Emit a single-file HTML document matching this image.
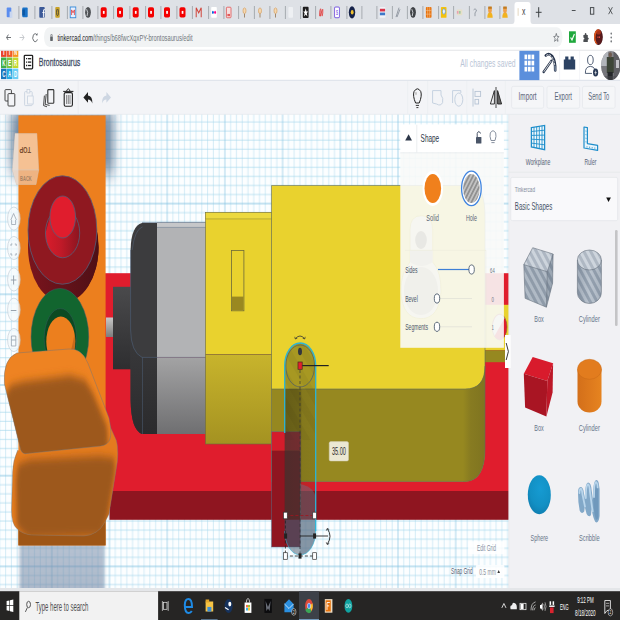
<!DOCTYPE html>
<html><head><meta charset="utf-8"><title>Tinkercad</title>
<style>
html,body{margin:0;padding:0;background:#fff;overflow:hidden}
svg{display:block;font-family:"Liberation Sans", sans-serif}
</style></head><body>
<svg width="620" height="620" viewBox="0 0 620 620">
<defs>
<pattern id="grid" x="51.8" y="22.2" width="57.7" height="90.7" patternUnits="userSpaceOnUse">
  <rect width="57.7" height="90.7" fill="#fcfeff"/>
  <g stroke="#a2d5eb">
   <line stroke-width="0.45" x1="5.77" y1="0" x2="5.77" y2="90.7"/><line stroke-width="0.45" x1="11.54" y1="0" x2="11.54" y2="90.7"/><line stroke-width="0.45" x1="17.31" y1="0" x2="17.31" y2="90.7"/><line stroke-width="0.45" x1="23.08" y1="0" x2="23.08" y2="90.7"/><line stroke-width="0.45" x1="28.85" y1="0" x2="28.85" y2="90.7"/><line stroke-width="0.45" x1="34.62" y1="0" x2="34.62" y2="90.7"/><line stroke-width="0.45" x1="40.39" y1="0" x2="40.39" y2="90.7"/><line stroke-width="0.45" x1="46.16" y1="0" x2="46.16" y2="90.7"/><line stroke-width="0.45" x1="51.93" y1="0" x2="51.93" y2="90.7"/><line stroke-width="0.65" x1="0" y1="9.07" x2="57.7" y2="9.07"/><line stroke-width="0.65" x1="0" y1="18.14" x2="57.7" y2="18.14"/><line stroke-width="0.65" x1="0" y1="27.21" x2="57.7" y2="27.21"/><line stroke-width="0.65" x1="0" y1="36.28" x2="57.7" y2="36.28"/><line stroke-width="0.65" x1="0" y1="45.35" x2="57.7" y2="45.35"/><line stroke-width="0.65" x1="0" y1="54.42" x2="57.7" y2="54.42"/><line stroke-width="0.65" x1="0" y1="63.49" x2="57.7" y2="63.49"/><line stroke-width="0.65" x1="0" y1="72.56" x2="57.7" y2="72.56"/><line stroke-width="0.65" x1="0" y1="81.63" x2="57.7" y2="81.63"/>
  </g>
  <path d="M0,0 L0,90.7 M57.7,0 L57.7,90.7" stroke="#7fc2e0" stroke-width="0.65"/>
  <path d="M0,0 L57.7,0 M0,90.7 L57.7,90.7" stroke="#7fc2e0" stroke-width="0.9"/>
</pattern>
<pattern id="stripes" width="3.5" height="10" patternUnits="userSpaceOnUse" patternTransform="rotate(27)">
  <rect width="3.5" height="10" fill="#c2c2c2"/><rect width="1.7" height="10" fill="#8f8f8f"/>
</pattern>
<pattern id="stripesB" width="6" height="10" patternUnits="userSpaceOnUse" patternTransform="rotate(-28)">
  <rect width="6" height="10" fill="#c2cbd5"/><rect width="3" height="10" fill="#9ba7b5"/>
</pattern>
<filter id="blur4" x="-50%" y="-50%" width="200%" height="200%"><feGaussianBlur stdDeviation="5 9"/></filter>
<filter id="blur2" x="-50%" y="-50%" width="200%" height="200%"><feGaussianBlur stdDeviation="1.8 2"/></filter>
<linearGradient id="shadowDown" x1="0" y1="0" x2="0" y2="1">
  <stop offset="0" stop-color="#7489a6" stop-opacity="0.5"/><stop offset="1" stop-color="#6f84a2" stop-opacity="0.58"/>
</linearGradient>
<linearGradient id="greySide" x1="0" y1="0" x2="0" y2="1">
  <stop offset="0" stop-color="#a3a3a4"/><stop offset="1" stop-color="#6f6f71"/>
</linearGradient>
<linearGradient id="darkSide" x1="0" y1="0" x2="0" y2="1">
  <stop offset="0" stop-color="#3a3a3c"/><stop offset="1" stop-color="#2b2b2d"/>
</linearGradient>
<linearGradient id="shaft" x1="0" y1="0" x2="0" y2="1">
  <stop offset="0" stop-color="#4a4a4c"/><stop offset="1" stop-color="#2e2e30"/>
</linearGradient>
<linearGradient id="coneG" x1="0" y1="0" x2="1" y2="0">
  <stop offset="0" stop-color="#d91c2b"/><stop offset="0.45" stop-color="#c01a28"/><stop offset="1" stop-color="#8b1520"/>
</linearGradient>
<linearGradient id="cylSide" x1="0" y1="0" x2="1" y2="0">
  <stop offset="0" stop-color="#7a141d"/><stop offset="1" stop-color="#4f1016"/>
</linearGradient>
<linearGradient id="smallcyl" x1="0" y1="0" x2="0" y2="1">
  <stop offset="0" stop-color="#c8c8c8"/><stop offset="1" stop-color="#7d7d7d"/>
</linearGradient>
<clipPath id="canvasClip"><rect x="0" y="114" width="510" height="476"/></clipPath>
</defs>
<rect x="0" y="0" width="620" height="620" fill="#fff"/>
<rect x="0" y="114" width="510" height="476" fill="url(#grid)"/>
<g clip-path="url(#canvasClip)">
<rect x="10.5" y="110" width="103" height="64" fill="#5f7894" opacity="0.85" filter="url(#blur4)"/>
<rect x="19.5" y="530" width="85" height="66" fill="url(#shadowDown)" filter="url(#blur2)"/>
<rect x="105" y="273.2" width="406" height="219" fill="#e01d2d"/>
<rect x="109.5" y="491" width="402" height="28.8" fill="#8f1520"/>
<rect x="18.4" y="115.4" width="87.2" height="430" fill="#ec7f1e"/>
<rect x="18.4" y="518" width="87.2" height="27.4" fill="#9e5616"/>
<ellipse cx="64.2" cy="247" rx="34.4" ry="54" fill="url(#cylSide)"/>
<path d="M28,230 L28,247 A34.4,54 0 0 0 98.6,247 L96.8,230 Z" fill="url(#cylSide)"/>
<ellipse cx="62.4" cy="230" rx="34.4" ry="54.2" fill="#8f1820" stroke="#55607a" stroke-width="0.8"/>
<path d="M45.6,233 A17,24.8 0 0 0 79.7,233 L75.5,217 A12.8,21 0 0 0 50,217 Z" fill="url(#coneG)"/>
<ellipse cx="62.6" cy="233" rx="17.1" ry="24.8" fill="none" stroke="#55607a" stroke-width="0.8"/>
<ellipse cx="62.7" cy="217" rx="12.8" ry="21" fill="#e01d2d" stroke="#55607a" stroke-width="0.8"/>
<ellipse cx="59.9" cy="337" rx="28.8" ry="48.6" fill="#12652f" stroke="#3d5a6a" stroke-width="0.5"/>
<ellipse cx="60.4" cy="338.5" rx="16.2" ry="30" fill="#0b4a22" stroke="#3d5a6a" stroke-width="0.4"/>
<ellipse cx="60.8" cy="341.5" rx="14.5" ry="25" fill="#ec7f1e"/>
<path d="M72,360 Q76.5,350 74.6,333 Q73,345 68,360 Z" fill="#b8611a" fill-opacity="0.7"/>
<rect x="106" y="317.5" width="7.5" height="19.5" fill="url(#smallcyl)"/>
<rect x="113" y="286.8" width="18" height="82.5" fill="url(#shaft)"/>
<path d="M157.2,223 L142,223 Q131,226 130.6,250 L130.6,400 Q131,430 142,434 L157.2,434 Z" fill="#3c3c3e"/>
<path d="M130.6,330 Q131,352 142,357.4 L157.2,357.4 L157.2,434 L142,434 Q131,430 130.6,400 Z" fill="url(#darkSide)"/>
<path d="M130.6,250 L130.6,330 Q131,352 142,357.4 L157.2,357.4" fill="none" stroke="#4e6079" stroke-width="0.6"/>
<path d="M142.5,357.4 L142.5,434" fill="none" stroke="#4e6079" stroke-width="0.5"/>
<path d="M142.6,226.8 Q134.6,229.5 132.2,250" fill="none" stroke="#5b6f8a" stroke-width="0.5" stroke-opacity="0.8"/>
<rect x="157" y="223" width="49" height="134.4" fill="#b2b3b5"/>
<rect x="157" y="222.4" width="49" height="5" fill="#c6c7c9"/>
<line x1="157" y1="227.4" x2="206" y2="227.4" stroke="#64768c" stroke-width="0.5"/>
<line x1="142" y1="222.4" x2="206" y2="222.4" stroke="#4e6079" stroke-width="0.6"/>
<rect x="157" y="357.4" width="49" height="76.6" fill="url(#greySide)"/>
<line x1="157" y1="357.4" x2="206" y2="357.4" stroke="#5b6f86" stroke-width="0.6"/>
<rect x="205.5" y="212.5" width="66.5" height="142" fill="#e9d22e"/>
<rect x="205.5" y="212.5" width="66.5" height="6.4" fill="#ecd93f"/>
<line x1="205.5" y1="218.9" x2="272" y2="218.9" stroke="#8d8430" stroke-width="0.5"/>
<linearGradient id="ysmall" x1="0" y1="0" x2="0" y2="1"><stop offset="0" stop-color="#c8b42c"/><stop offset="1" stop-color="#a49221"/></linearGradient>
<rect x="205.5" y="354.5" width="66.5" height="89.5" fill="url(#ysmall)"/>
<rect x="205.5" y="212.5" width="66.5" height="231.5" fill="none" stroke="#6d6a3a" stroke-width="0.6"/>
<line x1="205.5" y1="354.5" x2="272" y2="354.5" stroke="#6d6a3a" stroke-width="0.6"/>
<rect x="231.5" y="250.5" width="12.4" height="60.3" fill="#e9d22e" stroke="#6d6a3a" stroke-width="0.8"/>
<rect x="231.9" y="296.6" width="11.6" height="13.8" fill="#9a8820"/>
<rect x="485" y="304.8" width="26" height="45.4" fill="#e9d22e"/>
<rect x="485" y="350.2" width="26" height="12" fill="#968820"/>
<ellipse cx="499.6" cy="327" rx="7.4" ry="13" fill="#e01d2d"/>
<path d="M494.4,336.2 A7.4,13 0 0 1 504.8,317.8 Z" fill="#d9d9d4"/>
<ellipse cx="499.6" cy="327" rx="7.4" ry="13" fill="none" stroke="#6d6a3a" stroke-width="0.5"/>
<path d="M271.5,481.4 L271.5,185.5 L473,185.5 Q485,186.5 485,218 L485,448 Q485,481.4 465,481.4 Z" fill="#e9d22e"/>
<path d="M271.5,389 L465,389 Q485,389 485,366 L485,448 Q485,481.4 465,481.4 L271.5,481.4 Z" fill="#968820"/>
<linearGradient id="ysideR" x1="0" y1="0" x2="1" y2="0"><stop offset="0" stop-color="#968820"/><stop offset="0.35" stop-color="#877b21"/><stop offset="1" stop-color="#7f7420"/></linearGradient>
<path d="M463,389 L465,389 Q485,389 485,366 L485,448 Q485,481.4 465,481.4 L463,481.4 Z" fill="url(#ysideR)"/>
<path d="M271.5,481.4 L271.5,185.5 L473,185.5 Q485,186.5 485,218 L485,448 Q485,481.4 465,481.4 Z" fill="none" stroke="#5f6b5a" stroke-width="0.6"/>
<path d="M271.5,389 L465,389 Q485,389 485,366" fill="none" stroke="#5f6b5a" stroke-width="0.6"/>
<clipPath id="blobLo"><path d="M17.8,450 Q13,460 12.6,472 L11.5,510 Q11.5,524 16.8,528.5 Q22,534 31.4,535 L84,536 Q98,535 105,522 L109,514 L117.4,461.4 Q118.5,448 116.4,440.5 L109,424 L100,446 L25,454 Z"/></clipPath>
<clipPath id="blobUp"><path d="M16.8,353 L69,349 Q82,348 88,363.5 L109,418 Q112,432 110,439 Q108,445 100.6,446 L25,453.7 Q21,453 20,447 L4.4,384 Q2.6,359 16.8,353 Z"/></clipPath>
<filter id="blurB" x="-30%" y="-30%" width="160%" height="160%"><feGaussianBlur stdDeviation="2.3 4.2"/></filter>
<g clip-path="url(#blobLo)"><rect x="0" y="420" width="130" height="125" fill="#e47b1f"/><path d="M18,464 L30,459.5 L100,456 L114.5,458 L115,472 L107.5,517 L101,536 L28,538 L17,527 L16,480 Z" fill="#9d581a" filter="url(#blurB)"/></g>
<path d="M17.8,450 Q13,460 12.6,472 L11.5,510 Q11.5,524 16.8,528.5 Q22,534 31.4,535 L84,536 Q98,535 105,522 L109,514 L117.4,461.4 Q118.5,448 116.4,440.5 L109,424" fill="none" stroke="#6b7a8c" stroke-width="0.5" stroke-opacity="0.7"/>
<g clip-path="url(#blobUp)"><rect x="0" y="340" width="130" height="125" fill="#ee8322"/><path d="M5.5,394 L11,385 L24,381.5 L70,375.5 L85,380 L92.5,392 L107.5,427 L108.5,456 L19,462 L4.5,404 Z" fill="#9d581a" filter="url(#blurB)"/></g>
<path d="M16.8,353 L69,349 Q82,348 88,363.5 L109,418 Q112,432 110,439 Q108,445 100.6,446 L25,453.7 Q21,453 20,447 L4.4,384 Q2.6,359 16.8,353 Z" fill="none" stroke="#5f7388" stroke-width="0.5" stroke-opacity="0.8"/>
<rect x="271.5" y="431.8" width="29" height="19" fill="#d51c2b"/>
<rect x="271.5" y="450.6" width="29" height="96.4" fill="#8f1520"/>
<rect x="271.5" y="431.8" width="29" height="115.2" fill="none" stroke="#5b6f86" stroke-width="0.5"/>
<clipPath id="capTop"><rect x="280" y="340" width="40" height="179.8"/></clipPath>
<clipPath id="capBot"><rect x="280" y="519.8" width="40" height="40"/></clipPath>
<clipPath id="capClip"><path d="M284.7,365.5 A15.5,22.5 0 0 1 315.7,365.5 L315.7,531 A15.5,24 0 0 1 284.7,531 Z"/></clipPath>
<pattern id="capStripes" width="14" height="10" patternUnits="userSpaceOnUse" patternTransform="rotate(-30)"><rect width="7" height="10" fill="#000" fill-opacity="0.04"/></pattern>
<linearGradient id="capG" x1="0" y1="0" x2="1" y2="0"><stop offset="0" stop-color="#35320e" stop-opacity="0.5"/><stop offset="0.5" stop-color="#35320e" stop-opacity="0.42"/><stop offset="0.56" stop-color="#3d3a10" stop-opacity="0.2"/><stop offset="1" stop-color="#3d3a10" stop-opacity="0.16"/></linearGradient>
<clipPath id="capTopA"><rect x="280" y="340" width="40" height="49"/></clipPath>
<clipPath id="capTopB"><rect x="280" y="389" width="40" height="130.8"/></clipPath>
<g clip-path="url(#capTopA)"><path d="M284.7,365.5 A15.5,22.5 0 0 1 315.7,365.5 L315.7,531 A15.5,24 0 0 1 284.7,531 Z" fill="#3d3a10" fill-opacity="0.38"/></g>
<g clip-path="url(#capTopB)"><path d="M284.7,365.5 A15.5,22.5 0 0 1 315.7,365.5 L315.7,531 A15.5,24 0 0 1 284.7,531 Z" fill="url(#capG)"/></g>
<g clip-path="url(#capBot)"><path d="M284.7,365.5 A15.5,22.5 0 0 1 315.7,365.5 L315.7,531 A15.5,24 0 0 1 284.7,531 Z" fill="#56687a" fill-opacity="0.55"/></g>
<g clip-path="url(#capClip)"><rect x="280" y="340" width="40" height="100" fill="url(#capStripes)"/></g>
<g clip-path="url(#capClip)"><rect x="284" y="432" width="16.2" height="115" fill="#2a4058" fill-opacity="0.3"/><path d="M300.2,484 Q315.7,487 315.7,500 L315.7,560 L300.2,560 Z" fill="#5f7890" fill-opacity="0.42"/></g>
<ellipse cx="300.2" cy="366" rx="14.4" ry="21" fill="none" stroke="#4a5a6a" stroke-width="0.7"/>
<path d="M284.7,433 L284.7,365.5 A15.5,22.5 0 0 1 315.7,365.5 L315.7,531" fill="none" stroke="#2bb5d9" stroke-width="1.3"/>
<path d="M315.7,531 A15.5,24 0 0 1 284.7,531" fill="none" stroke="#2bb5d9" stroke-width="0.8" stroke-opacity="0.7"/>
<line x1="300" y1="370" x2="300" y2="556" stroke="#333" stroke-width="0.7" stroke-dasharray="3 2.5"/>
<line x1="302" y1="365.6" x2="328.7" y2="365.6" stroke="#222" stroke-width="1.2"/>
<rect x="298" y="362" width="4.2" height="7.3" fill="#e2202c" stroke="#4a2a20" stroke-width="0.7"/>
<ellipse cx="300" cy="351.5" rx="2" ry="3.8" fill="#33363d"/>
<path d="M295.5,338.5 Q300,333.5 304.5,338.5" fill="none" stroke="#333" stroke-width="0.8"/>
<path d="M294.8,336.8 L295.3,339 L297.3,338.2 M305.2,336.8 L304.7,339 L302.7,338.2" fill="none" stroke="#333" stroke-width="0.7"/>
<rect x="329.2" y="441.6" width="19.3" height="19.4" rx="1.6" fill="#ebe8d3" stroke="#cfcbae" stroke-width="0.5"/>
<text x="338.9" y="454.6" font-size="11" fill="#2e2e2e" text-anchor="middle" font-weight="normal" textLength="14" lengthAdjust="spacingAndGlyphs" >35.00</text>
<line x1="285.4" y1="515.5" x2="314.8" y2="515.5" stroke="#a01520" stroke-width="0.8" stroke-dasharray="3 2"/>
<path d="M285.4,515.5 L285.4,556 L314.8,556" fill="none" stroke="#222" stroke-width="0.8" stroke-dasharray="3 2"/>
<line x1="300" y1="536" x2="328" y2="536" stroke="#222" stroke-width="0.9"/>
<rect x="283.5" y="512.2" width="3.8" height="6.6" fill="#fff" stroke="#333" stroke-width="0.7"/>
<rect x="312.70000000000005" y="512.2" width="3.8" height="6.6" fill="#fff" stroke="#333" stroke-width="0.7"/>
<rect x="283.5" y="552.7" width="3.8" height="6.6" fill="#fff" stroke="#333" stroke-width="0.7"/>
<rect x="312.70000000000005" y="552.7" width="3.8" height="6.6" fill="#fff" stroke="#333" stroke-width="0.7"/>
<rect x="284.1" y="533.4" width="3" height="5.2" fill="#222"/>
<rect x="298.5" y="553.4" width="3" height="5.2" fill="#222"/>
<rect x="313.1" y="533.4" width="3" height="5.2" fill="#222"/>
<path d="M327.5,529 Q332.5,536 327.5,544" fill="none" stroke="#222" stroke-width="0.9"/>
<path d="M326.3,530.6 L327.3,528.4 L329.2,529.6 M326.3,542.4 L327.3,544.6 L329.2,543.4" fill="none" stroke="#222" stroke-width="0.8"/>
<rect x="400.3" y="152.8" width="103.6" height="195" fill="#f8f9f8" fill-opacity="0.9"/>
<rect x="400.3" y="124.4" width="103.6" height="28.4" fill="#fff"/>
<line x1="416.8" y1="124.7" x2="416.8" y2="152.6" stroke="#e3e6ea" stroke-width="0.7"/>
<line x1="400.3" y1="152.8" x2="503.9" y2="152.8" stroke="#e3e6ea" stroke-width="0.7"/>
<path d="M405.2,140.4 L412,140.4 L408.6,134.2 Z" fill="#2d3748"/>
<text x="420.6" y="142" font-size="11.5" fill="#2d3748" text-anchor="start" font-weight="normal" textLength="18.6" lengthAdjust="spacingAndGlyphs" >Shape</text>
<rect x="476" y="137" width="5.4" height="6.6" rx="0.6" fill="#4a5568"/>
<path d="M477.2,137 L477.2,133.5 Q478.8,129.5 480.5,133.5" fill="none" stroke="#4a5568" stroke-width="1"/>
<path d="M491,140.5 Q489.4,136 490.3,133 Q493,128.5 495.7,133 Q496.6,136 495,140.5 Z" fill="none" stroke="#7a8594" stroke-width="0.9"/>
<line x1="491.4" y1="142.6" x2="494.6" y2="142.6" stroke="#7a8594" stroke-width="0.9"/>
<ellipse cx="432.8" cy="188.4" rx="10.2" ry="17.6" fill="#fff"/>
<ellipse cx="432.8" cy="188.4" rx="8.3" ry="14.5" fill="#f0801c"/>
<ellipse cx="471.4" cy="188.4" rx="9.8" ry="17.2" fill="#fff" stroke="#3f84e0" stroke-width="1.3"/>
<ellipse cx="471.4" cy="188.4" rx="8.3" ry="14.5" fill="url(#stripes)"/>
<g opacity="0.85"><path d="M410,230 Q410,215.7 421.3,215.7 Q432.7,215.7 432.7,230 L432.7,262 Q441.5,272 441,292 Q439,318.6 421,318.6 Q402.5,318.6 401,292 Q400.6,272 410,262 Z" fill="#f6f6f4" stroke="#f0eed4" stroke-width="0.6"/><ellipse cx="421" cy="291" rx="17" ry="24" fill="#efefed"/><path d="M410,250 L432.7,250 L432.7,262 Q421,270 410,262 Z" fill="#f1f1ef"/><ellipse cx="421" cy="240" rx="5.8" ry="9" fill="#e6e6e4"/></g>
<text x="432.6" y="220.5" font-size="9.5" fill="#5a6575" text-anchor="middle" font-weight="normal" textLength="12.5" lengthAdjust="spacingAndGlyphs" >Solid</text>
<text x="471.4" y="220.5" font-size="9.5" fill="#5a6575" text-anchor="middle" font-weight="normal" textLength="11" lengthAdjust="spacingAndGlyphs" >Hole</text>
<line x1="405" y1="250.3" x2="486" y2="250.3" stroke="#ecebdc" stroke-width="0.6"/>
<line x1="486" y1="250.3" x2="486" y2="347.8" stroke="#e6e5d6" stroke-width="0.5" stroke-opacity="0.7"/>
<text x="405.2" y="273" font-size="9.5" fill="#4a5568" text-anchor="start" font-weight="normal" textLength="12.4" lengthAdjust="spacingAndGlyphs" >Sides</text>
<text x="405.2" y="302" font-size="9.5" fill="#4a5568" text-anchor="start" font-weight="normal" textLength="12.6" lengthAdjust="spacingAndGlyphs" >Bevel</text>
<text x="405.2" y="330.3" font-size="9.5" fill="#4a5568" text-anchor="start" font-weight="normal" textLength="22.8" lengthAdjust="spacingAndGlyphs" >Segments</text>
<line x1="438" y1="269.5" x2="470" y2="269.5" stroke="#3d7fd6" stroke-width="1.2"/>
<ellipse cx="471.6" cy="269.5" rx="2.7" ry="4.6" fill="#fff" stroke="#3a4a5e" stroke-width="0.8"/>
<line x1="440" y1="298.5" x2="472" y2="298.5" stroke="#e6e6da" stroke-width="1"/>
<ellipse cx="437" cy="298.5" rx="2.7" ry="4.6" fill="#fff" stroke="#3a4a5e" stroke-width="0.8"/>
<line x1="440" y1="326.8" x2="472" y2="326.8" stroke="#e6e6da" stroke-width="1"/>
<ellipse cx="437" cy="326.8" rx="2.7" ry="4.6" fill="#fff" stroke="#3a4a5e" stroke-width="0.8"/>
<text x="492.4" y="272.5" font-size="8" fill="#6a7585" text-anchor="middle" font-weight="normal" textLength="4.6" lengthAdjust="spacingAndGlyphs" >64</text>
<text x="492.8" y="301.5" font-size="8" fill="#6a7585" text-anchor="middle" font-weight="normal" textLength="2.4" lengthAdjust="spacingAndGlyphs" >0</text>
<text x="492.8" y="329.8" font-size="8" fill="#6a7585" text-anchor="middle" font-weight="normal" textLength="2" lengthAdjust="spacingAndGlyphs" >1</text>
<rect x="468.2" y="541.3" width="36.2" height="13" rx="1" fill="#fff" fill-opacity="0.82"/>
<text x="486.5" y="551.2" font-size="8.8" fill="#8793a3" text-anchor="middle" font-weight="normal" textLength="19.2" lengthAdjust="spacingAndGlyphs" >Edit Grid</text>
<text x="451" y="574.4" font-size="9" fill="#566275" text-anchor="start" font-weight="normal" textLength="21.7" lengthAdjust="spacingAndGlyphs" >Snap Grid</text>
<rect x="475.9" y="565" width="28.5" height="13" rx="1" fill="#fff" fill-opacity="0.88"/>
<text x="479.2" y="574.6" font-size="8.8" fill="#8a929c" text-anchor="start" font-weight="normal" textLength="16.7" lengthAdjust="spacingAndGlyphs" >0.5 mm</text>
<path d="M497.4,573 L500,573 L498.7,570 Z" fill="#333"/>
<path d="M15.1,133.6 L36.8,133.6 L38.7,170 L12.6,170 Z" fill="#f6c9a0" fill-opacity="0.9" stroke="#d9c5b5" stroke-width="0.5"/>
<path d="M12.6,170 L38.7,170 L36,184.5 L16.5,184.5 Z" fill="#eeb98d" fill-opacity="0.9" stroke="#d9c5b5" stroke-width="0.5"/>
<path d="M15.1,133.6 L18.4,133.6 L18.4,184.5 L16.5,184.5 L12.6,170 Z" fill="#e6eaef" fill-opacity="0.6"/>
<text x="0" y="0" font-size="9.5" font-weight="bold" fill="#7a4e2e" text-anchor="middle" textLength="11.6" lengthAdjust="spacingAndGlyphs" transform="translate(25.2,147.4) rotate(180)">TOP</text>
<text x="25.9" y="180.5" font-size="6.5" fill="#a88262" text-anchor="middle" font-weight="bold" textLength="11.6" lengthAdjust="spacingAndGlyphs" >BACK</text>
<ellipse cx="13.9" cy="218.6" rx="6.3" ry="11.6" fill="#f4f9fc" fill-opacity="0.72" stroke="#bcc7d2" stroke-width="0.6"/>
<ellipse cx="13.9" cy="248" rx="6.3" ry="11.6" fill="#f4f9fc" fill-opacity="0.72" stroke="#bcc7d2" stroke-width="0.6"/>
<ellipse cx="13.9" cy="279.5" rx="6.3" ry="11.6" fill="#f4f9fc" fill-opacity="0.72" stroke="#bcc7d2" stroke-width="0.6"/>
<ellipse cx="13.9" cy="309.7" rx="6.3" ry="11.6" fill="#f4f9fc" fill-opacity="0.72" stroke="#bcc7d2" stroke-width="0.6"/>
<ellipse cx="13.9" cy="340" rx="6.3" ry="11.6" fill="#f4f9fc" fill-opacity="0.72" stroke="#bcc7d2" stroke-width="0.6"/>
<path d="M10.8,220 L13.6,213.5 L16.4,220 M11.6,220 L11.6,224.5 L15.6,224.5 L15.6,220" fill="none" stroke="#9aa5b0" stroke-width="0.8"/>
<path d="M11,246 L11,244 L12.4,244 M14.8,244 L16.2,244 L16.2,246 M11,253 L11,255 L12.4,255 M14.8,255 L16.2,255 L16.2,253" fill="none" stroke="#9aa5b0" stroke-width="0.8"/>
<path d="M13.6,275.5 L13.6,284.5 M10.8,280 L16.4,280" stroke="#8f9aa6" stroke-width="0.9"/>
<path d="M10.8,310.5 L16.4,310.5" stroke="#8f9aa6" stroke-width="0.9"/>
<path d="M11.4,336 L15.8,336 L15.8,346 L11.4,346 Z M11.4,340 L15.8,340" fill="none" stroke="#9aa5b0" stroke-width="0.8"/>
</g>
<rect x="508.6" y="114" width="112" height="476" fill="#f1f1f4"/>
<line x1="508.8" y1="114" x2="508.8" y2="590" stroke="#dfe2e6" stroke-width="0.5"/>
<rect x="505" y="335" width="5.6" height="33" fill="#fff"/>
<path d="M506.2,343 L508.4,351.5 L506.2,360" fill="none" stroke="#222" stroke-width="0.9"/>
<line x1="508.6" y1="172.2" x2="620" y2="172.2" stroke="#e4e6ea" stroke-width="0.7"/>
<g stroke="#1f8ecb" stroke-width="0.9" fill="none"><path d="M531.4,127.6 L544.6,125.4 L544.6,149.6 L531.4,147 Z" fill="#f4fafd" stroke-width="1.3"/><line x1="534.0" y1="127.2" x2="534.0" y2="147.5"/><line x1="536.7" y1="126.7" x2="536.7" y2="148.0"/><line x1="539.3" y1="126.3" x2="539.3" y2="148.6"/><line x1="542.0" y1="125.8" x2="542.0" y2="149.1"/><line x1="531.4" y1="131.5" x2="544.6" y2="130.2"/><line x1="531.4" y1="135.4" x2="544.6" y2="135.1"/><line x1="531.4" y1="139.2" x2="544.6" y2="139.9"/><line x1="531.4" y1="143.1" x2="544.6" y2="144.8"/></g>
<text x="538" y="164.6" font-size="9.2" fill="#566275" text-anchor="middle" font-weight="normal" textLength="24.5" lengthAdjust="spacingAndGlyphs" >Workplane</text>
<path d="M584,127 L587.4,127.6 L587.4,143.6 L597.6,145.4 L597.6,150.4 L584,148 Z" fill="#eaf5fb" stroke="#1f8ecb" stroke-width="1.2" stroke-linejoin="round"/>
<path d="M585.4,131 L586.6,131.2 M585.4,134.6 L586.6,134.8 M585.4,138.2 L586.6,138.4 M585.4,141.8 L586.6,142 M587,146.2 L587,147.6 M589.6,146.6 L589.6,148 M592.2,147 L592.2,148.4 M594.8,147.4 L594.8,148.8" stroke="#1f8ecb" stroke-width="0.7"/>
<text x="590.4" y="164.6" font-size="9.2" fill="#566275" text-anchor="middle" font-weight="normal" textLength="12" lengthAdjust="spacingAndGlyphs" >Ruler</text>
<rect x="510.7" y="177.4" width="106.9" height="43.2" rx="1.5" fill="#f9f9fb" stroke="#e4e6ea" stroke-width="0.7"/>
<text x="514.8" y="192" font-size="8" fill="#7f8a9a" text-anchor="start" font-weight="normal" textLength="20.2" lengthAdjust="spacingAndGlyphs" >Tinkercad</text>
<text x="514.8" y="209.9" font-size="11.2" fill="#475468" text-anchor="start" font-weight="normal" textLength="37.5" lengthAdjust="spacingAndGlyphs" >Basic Shapes</text>
<path d="M606.2,197.6 L610.9,197.6 L608.55,201.9 Z" fill="#111"/>
<rect x="615" y="230" width="2.6" height="96" rx="1.2" fill="#c4c4c6"/>
<polygon points="532.7,247.7 553.1,254.0 552.6,283.2 546.4,307.2 525.1,298.3 523.8,264.6" fill="url(#stripesB)"/>
<polygon points="532.7,247.7 553.1,254.0 547.3,271.7 523.8,264.6" fill="#fff" fill-opacity="0.18"/>
<polygon points="523.8,264.6 547.3,271.7 546.4,307.2 525.1,298.3" fill="#3a4a5e" fill-opacity="0.13"/>
<polygon points="547.3,271.7 553.1,254.0 552.6,283.2 546.4,307.2" fill="#3a4a5e" fill-opacity="0.28"/>
<path d="M532.7,247.7 L553.1,254.0 L552.6,283.2 L546.4,307.2 L525.1,298.3 L523.8,264.6 Z M523.8,264.6 L547.3,271.7 L553.1,254.0 M547.3,271.7 L546.4,307.2" fill="none" stroke="#6a7480" stroke-width="0.6"/>
<path d="M577.4,260 A12,10 0 0 1 601.4,260 L601.4,292.5 A12,11 0 0 1 577.4,292.5 Z" fill="url(#stripesB)"/>
<linearGradient id="cylsh" x1="0" y1="0" x2="1" y2="0"><stop offset="0" stop-color="#3a4a5e" stop-opacity="0.25"/><stop offset="0.5" stop-color="#3a4a5e" stop-opacity="0.05"/><stop offset="1" stop-color="#3a4a5e" stop-opacity="0.18"/></linearGradient>
<path d="M577.4,260 A12,10 0 0 0 601.4,260 L601.4,292.5 A12,11 0 0 1 577.4,292.5 Z" fill="url(#cylsh)"/>
<ellipse cx="589.4" cy="260" rx="12" ry="10" fill="#fff" fill-opacity="0.2"/>
<path d="M577.4,260 A12,10 0 0 1 601.4,260 L601.4,292.5 A12,11 0 0 1 577.4,292.5 Z M577.4,260 A12,10 0 0 0 601.4,260" fill="none" stroke="#6a7480" stroke-width="0.6"/>
<text x="539" y="321.5" font-size="9.6" fill="#66758a" text-anchor="middle" font-weight="normal" textLength="9.4" lengthAdjust="spacingAndGlyphs" >Box</text>
<text x="589.3" y="321.5" font-size="9.6" fill="#66758a" text-anchor="middle" font-weight="normal" textLength="21" lengthAdjust="spacingAndGlyphs" >Cylinder</text>
<polygon points="532.7,356.9 553.1,363.2 547.3,380.9 523.8,373.8" fill="#d81b2c"/>
<polygon points="523.8,373.8 547.3,380.9 546.4,416.4 525.1,407.5" fill="#a91523"/>
<polygon points="547.3,380.9 553.1,363.2 552.6,392.4 546.4,416.4" fill="#bd1828"/>
<linearGradient id="ocyl" x1="0" y1="0" x2="1" y2="0"><stop offset="0" stop-color="#d36f1a"/><stop offset="0.5" stop-color="#dd791d"/><stop offset="1" stop-color="#e68420"/></linearGradient>
<path d="M577.5,369.3 L601.5,369.3 L601.5,401.5 A12,11 0 0 1 577.5,401.5 Z" fill="url(#ocyl)"/>
<ellipse cx="589.5" cy="369.3" rx="12" ry="10" fill="#e27c1e" stroke="#c96a18" stroke-width="0.5"/>
<text x="539" y="431" font-size="9.6" fill="#66758a" text-anchor="middle" font-weight="normal" textLength="9.4" lengthAdjust="spacingAndGlyphs" >Box</text>
<text x="589.3" y="431" font-size="9.6" fill="#66758a" text-anchor="middle" font-weight="normal" textLength="21" lengthAdjust="spacingAndGlyphs" >Cylinder</text>
<radialGradient id="sph" cx="0.55" cy="0.35" r="0.75"><stop offset="0" stop-color="#169bd2"/><stop offset="0.6" stop-color="#1290c4"/><stop offset="1" stop-color="#0e78aa"/></radialGradient>
<ellipse cx="539.3" cy="494.7" rx="11.5" ry="19.5" fill="url(#sph)"/>
<path d="M578,493 Q577.8,487.6 580.6,487 Q583.2,487 583.8,492.5 L585,499 Q584.6,484 588,482.6 Q591,482.6 591.6,490 L593,500 Q592.8,481 596.2,480 Q598.6,480 599,485 L599.6,489 L599.6,516 Q598.6,524 595.4,522 Q593,518 591.6,509 L591,515 Q589,518 586.6,514 L584.8,507 L584.2,511.5 Q582,514.5 579.8,511 Q578,503 578,493 Z" fill="#82a8c8"/>
<path d="M593.4,503 Q593.2,484 596,482.4 L598.2,487 L598.4,517 Q597.4,520.6 595.8,519.6 Q594,514 593.4,503 Z" fill="#6f98bc"/>
<path d="M579.4,493 Q579.6,488.8 580.8,488.6 Q582,489.2 582.4,494 L585,506.6 M585.8,498 Q585.8,485.4 588,484.4 Q589.6,485 590,492 L592.6,511.4 M594,497 Q594,483 596,482 Q597.4,482.6 597.6,487.4" fill="none" stroke="#b9d5eb" stroke-width="1.8" stroke-linecap="round" stroke-linejoin="round"/>
<text x="539.3" y="540.6" font-size="9.6" fill="#66758a" text-anchor="middle" font-weight="normal" textLength="17.6" lengthAdjust="spacingAndGlyphs" >Sphere</text>
<text x="589.3" y="540.6" font-size="9.6" fill="#66758a" text-anchor="middle" font-weight="normal" textLength="20.6" lengthAdjust="spacingAndGlyphs" >Scribble</text>
<rect x="0" y="0" width="620" height="24" fill="#dee1e6"/>
<rect x="0" y="24" width="620" height="26" fill="#fff"/>
<line x1="0" y1="50.3" x2="620" y2="50.3" stroke="#d5d8dc" stroke-width="0.8"/>
<path d="M512,24 Q514.5,24 514.5,20.5 L514.5,5 Q514.5,2 517,2 L528,2 Q530.5,2 530.5,5 L530.5,20.5 Q530.5,24 533,24 Z" fill="#fff"/>
<rect x="517.4" y="8.2" width="1.6" height="7.6" fill="#eee6d8"/>
<text x="523.6" y="15" font-size="10" fill="#3c4043" text-anchor="middle" font-weight="normal" textLength="3.4" lengthAdjust="spacingAndGlyphs" >x</text>
<path d="M535.8,12.3 L541.6,12.3 M538.7,7.2 L538.7,17.4" stroke="#3c4043" stroke-width="1"/>
<line x1="571.8" y1="10.5" x2="575.6" y2="10.5" stroke="#3c4043" stroke-width="0.9"/>
<rect x="590.4" y="7.6" width="3.4" height="6.6" fill="none" stroke="#3c4043" stroke-width="0.9"/>
<path d="M608.6,7.2 L612.4,14.2 M612.4,7.2 L608.6,14.2" stroke="#3c4043" stroke-width="0.8"/>
<line x1="18.9" y1="6" x2="18.9" y2="19" stroke="#8e9399" stroke-width="0.7"/>
<line x1="34.9" y1="6" x2="34.9" y2="19" stroke="#8e9399" stroke-width="0.7"/>
<line x1="51.9" y1="6" x2="51.9" y2="19" stroke="#8e9399" stroke-width="0.7"/>
<line x1="67.4" y1="6" x2="67.4" y2="19" stroke="#8e9399" stroke-width="0.7"/>
<line x1="82.9" y1="6" x2="82.9" y2="19" stroke="#8e9399" stroke-width="0.7"/>
<line x1="97.9" y1="6" x2="97.9" y2="19" stroke="#8e9399" stroke-width="0.7"/>
<line x1="113.6" y1="6" x2="113.6" y2="19" stroke="#8e9399" stroke-width="0.7"/>
<line x1="129.9" y1="6" x2="129.9" y2="19" stroke="#8e9399" stroke-width="0.7"/>
<line x1="145.6" y1="6" x2="145.6" y2="19" stroke="#8e9399" stroke-width="0.7"/>
<line x1="160.9" y1="6" x2="160.9" y2="19" stroke="#8e9399" stroke-width="0.7"/>
<line x1="176.9" y1="6" x2="176.9" y2="19" stroke="#8e9399" stroke-width="0.7"/>
<line x1="192.4" y1="6" x2="192.4" y2="19" stroke="#8e9399" stroke-width="0.7"/>
<line x1="208.6" y1="6" x2="208.6" y2="19" stroke="#8e9399" stroke-width="0.7"/>
<line x1="223.9" y1="6" x2="223.9" y2="19" stroke="#8e9399" stroke-width="0.7"/>
<line x1="238.6" y1="6" x2="238.6" y2="19" stroke="#8e9399" stroke-width="0.7"/>
<line x1="254.4" y1="6" x2="254.4" y2="19" stroke="#8e9399" stroke-width="0.7"/>
<line x1="269.9" y1="6" x2="269.9" y2="19" stroke="#8e9399" stroke-width="0.7"/>
<line x1="285.4" y1="6" x2="285.4" y2="19" stroke="#8e9399" stroke-width="0.7"/>
<line x1="300.6" y1="6" x2="300.6" y2="19" stroke="#8e9399" stroke-width="0.7"/>
<line x1="315.6" y1="6" x2="315.6" y2="19" stroke="#8e9399" stroke-width="0.7"/>
<line x1="330.9" y1="6" x2="330.9" y2="19" stroke="#8e9399" stroke-width="0.7"/>
<line x1="346.9" y1="6" x2="346.9" y2="19" stroke="#8e9399" stroke-width="0.7"/>
<line x1="361.9" y1="6" x2="361.9" y2="19" stroke="#8e9399" stroke-width="0.7"/>
<line x1="376.9" y1="6" x2="376.9" y2="19" stroke="#8e9399" stroke-width="0.7"/>
<line x1="392.4" y1="6" x2="392.4" y2="19" stroke="#8e9399" stroke-width="0.7"/>
<line x1="407.4" y1="6" x2="407.4" y2="19" stroke="#8e9399" stroke-width="0.7"/>
<line x1="422.9" y1="6" x2="422.9" y2="19" stroke="#8e9399" stroke-width="0.7"/>
<line x1="438.6" y1="6" x2="438.6" y2="19" stroke="#8e9399" stroke-width="0.7"/>
<line x1="453.6" y1="6" x2="453.6" y2="19" stroke="#8e9399" stroke-width="0.7"/>
<line x1="469.4" y1="6" x2="469.4" y2="19" stroke="#8e9399" stroke-width="0.7"/>
<line x1="484.9" y1="6" x2="484.9" y2="19" stroke="#8e9399" stroke-width="0.7"/>
<line x1="499.9" y1="6" x2="499.9" y2="19" stroke="#8e9399" stroke-width="0.7"/>

<g transform="translate(0,-1.3) scale(1,1.12)">
<rect x="6.7" y="7.9" width="4.6" height="8.6" rx="0.8" fill="#5b8def"/>
<rect x="9.6" y="11.5" width="2.8" height="5.6" fill="#c9d6ef"/>
<rect x="22.3" y="7.9" width="5.4" height="8.6" rx="0.8" fill="#1a73c8"/>
<rect x="22.3" y="9.6" width="2.6" height="5.4" fill="#0b57a4"/>
<rect x="39.3" y="7.5" width="5.4" height="9.4" rx="0.8" fill="#3b5998"/>
<path d="M43.4,16.8 L43.4,12.6 M42.4,12.4 L44.6,12.4 M43.4,12.6 Q43.2,9.4 44.8,9.6" stroke="#fff" stroke-width="0.9" fill="none"/>
<rect x="55.3" y="7.4" width="4.4" height="9.6" rx="0.8" fill="#c9a227"/>
<ellipse cx="57.5" cy="12.2" rx="1" ry="3" fill="none" stroke="#3a3a3a" stroke-width="0.7"/>
<rect x="70.2" y="7.4" width="5.6" height="9.6" rx="0.8" fill="#e8f0ff"/>
<rect x="70.2" y="7.4" width="5.6" height="9.6" fill="none" stroke="#2f86d8" stroke-width="0.8"/><path d="M71.6,14.6 L71.6,10 L73,12.6 L74.4,10 L74.4,14.6" stroke="#e03030" stroke-width="0.7" fill="none"/>
<ellipse cx="88" cy="12.2" rx="2.9" ry="4.8" fill="#4f5256"/><path d="M86.6,9.4 Q88.6,12 87,15.6" stroke="#dee1e6" stroke-width="0.8" fill="none"/>
<rect x="100.7" y="7.6" width="6" height="9.2" rx="1.6" fill="#f40000"/><rect x="102.9" y="10.9" width="1.7" height="2.6" fill="#fff"/>
<rect x="117.0" y="7.6" width="6" height="9.2" rx="1.6" fill="#f40000"/><rect x="119.2" y="10.9" width="1.7" height="2.6" fill="#fff"/>
<rect x="132.7" y="7.6" width="6" height="9.2" rx="1.6" fill="#f40000"/><rect x="134.9" y="10.9" width="1.7" height="2.6" fill="#fff"/>
<rect x="148.0" y="7.6" width="6" height="9.2" rx="1.6" fill="#f40000"/><rect x="150.2" y="10.9" width="1.7" height="2.6" fill="#fff"/>
<rect x="164.0" y="7.6" width="6" height="9.2" rx="1.6" fill="#f40000"/><rect x="166.2" y="10.9" width="1.7" height="2.6" fill="#fff"/>
<rect x="179.5" y="7.6" width="6" height="9.2" rx="1.6" fill="#f40000"/><rect x="181.7" y="10.9" width="1.7" height="2.6" fill="#fff"/>
<path d="M196.2,16.6 L196.2,8 L198.7,12.6 L201.2,8 L201.2,16.6" stroke="#d0443a" stroke-width="1" fill="none"/>
<rect x="211.2" y="7.4" width="5.6" height="9.6" rx="0.8" fill="#fff"/>
<ellipse cx="212.9" cy="12.2" rx="0.9" ry="1.4" fill="#0063dc"/><ellipse cx="215.1" cy="12.2" rx="0.9" ry="1.4" fill="#ff0084"/>
<rect x="226.4" y="7.6" width="4.6" height="9.4" rx="0.8" fill="#f7dede" stroke="#e05a5a" stroke-width="0.8"/><rect x="227.4" y="13.6" width="2.6" height="2" fill="#e05a5a"/>
<ellipse cx="244.5" cy="10.8" rx="1.5" ry="2.6" fill="#f5d8b0" stroke="#d69a55" stroke-width="0.6"/><line x1="244.5" y1="13.4" x2="244.5" y2="16.8" stroke="#8a6a45" stroke-width="0.7"/>
<ellipse cx="260" cy="10.8" rx="1.5" ry="2.6" fill="#f5d8b0" stroke="#d69a55" stroke-width="0.6"/><line x1="260" y1="13.4" x2="260" y2="16.8" stroke="#8a6a45" stroke-width="0.7"/>
<ellipse cx="275.5" cy="10.8" rx="1.5" ry="2.6" fill="#f5d8b0" stroke="#d69a55" stroke-width="0.6"/><line x1="275.5" y1="13.4" x2="275.5" y2="16.8" stroke="#8a6a45" stroke-width="0.7"/>
<rect x="288.4" y="7.5" width="4.6" height="9.4" rx="0.8" fill="#eef0f3"/>
<rect x="302.8" y="7.2" width="5.8" height="10" rx="0.8" fill="#1d1d1d"/>
<path d="M305.7,8.6 L306.5,11.4 L308.1,11.4 L306.8,13 L307.4,15.8 L305.7,14.2 L304,15.8 L304.6,13 L303.3,11.4 L304.9,11.4 Z" fill="#fff"/>
<path d="M319.6,15.6 Q319.6,9 320.8,9 Q321.2,13 320.6,15.6 Q322,9.4 322.8,9.4 Q323,13 322.2,15.6" stroke="#e23a3a" stroke-width="0.8" fill="none"/>
<rect x="334.6" y="7.4" width="4.8" height="9.6" rx="1" fill="#fff" stroke="#7b5be0" stroke-width="0.9"/>
<text x="337" y="14.4" font-size="6" fill="#7b5be0" text-anchor="middle" font-weight="bold" textLength="2" lengthAdjust="spacingAndGlyphs" >S</text>
<ellipse cx="352" cy="12.2" rx="3.2" ry="5.4" fill="#16224a"/><ellipse cx="352.2" cy="12" rx="1.4" ry="2" fill="#f2c230"/>
<rect x="379.5" y="7.5" width="6" height="9.4" rx="0.8" fill="#f0f3f8"/>
<rect x="379.9" y="9" width="5.2" height="2.4" fill="#d9344a"/><rect x="379.9" y="12.4" width="5.2" height="2.4" fill="#3d78c8"/>
<path d="M396,16.4 L399,8 M397,16.4 L400,9.4" stroke="#7d8590" stroke-width="0.7"/>
<ellipse cx="413" cy="12.2" rx="2.9" ry="4.8" fill="#3f4246"/><path d="M411.8,9.4 Q413.8,12 412.2,15.6" stroke="#dee1e6" stroke-width="0.8" fill="none"/>
<rect x="425.9" y="7.4" width="5.6" height="9.6" rx="0.8" fill="#e8710a"/>
<path d="M427.7,7.4 L427.7,17 M429.7,7.4 L429.7,17 M425.9,10.6 L431.5,10.6 M425.9,13.8 L431.5,13.8" stroke="#f6c79b" stroke-width="0.5"/>
<rect x="440.9" y="7.3" width="5.6" height="9.8" rx="0.8" fill="#f4c20d"/>
<ellipse cx="443.9" cy="11.4" rx="1.5" ry="2.4" fill="#e8f2ff" stroke="#4a90d9" stroke-width="0.6"/>
<rect x="456.7" y="9.7" width="5.6" height="5" rx="0.8" fill="#e6e0c8"/>
<rect x="456.9" y="11" width="1.6" height="2.4" fill="#e8a0b0"/><rect x="459" y="11" width="1.6" height="2.4" fill="#a0c8a0"/>
<path d="M473.6,10 Q475,8 476.4,10 Q476.4,12 475,12.4 L475,15.6" stroke="#7d8590" stroke-width="0.7" fill="none"/>
<path d="M487.3,17 Q487.3,12 490,12 Q492.7,12 492.7,17 Z" fill="#f2b21d"/><ellipse cx="490" cy="10" rx="1.9" ry="2.8" fill="#f0a04a"/><rect x="488.2" y="7" width="3.6" height="2" fill="#c07a20"/>
<path d="M502.3,17 Q502.3,12 505,12 Q507.7,12 507.7,17 Z" fill="#f2b21d"/><ellipse cx="505" cy="10" rx="1.9" ry="2.8" fill="#f0a04a"/><rect x="503.2" y="7" width="3.6" height="2" fill="#c07a20"/>
</g>
<path d="M11,37.5 L6.6,37.5 M8.4,34.6 L6.6,37.5 L8.4,40.4" stroke="#5f6368" stroke-width="0.9" fill="none"/>
<path d="M19.6,37.5 L24,37.5 M22.2,34.6 L24,37.5 L22.2,40.4" stroke="#c1c4c8" stroke-width="0.9" fill="none"/>
<path d="M37,35 A2.4,4 0 1 0 37.4,39.4" stroke="#5f6368" stroke-width="0.9" fill="none"/><path d="M37.6,32.8 L37.4,35.6 L35.8,35.2 Z" fill="#5f6368"/>
<rect x="44" y="27.2" width="518.5" height="19.9" rx="5.5" ry="9.9" fill="#f1f3f4"/>
<rect x="50.2" y="36.6" width="2.6" height="4.4" rx="0.4" fill="#5f6368"/><path d="M50.8,36.6 L50.8,35 Q51.5,33 52.2,35 L52.2,36.6" stroke="#5f6368" stroke-width="0.6" fill="none"/>
<text x="57.4" y="41" font-size="9.5" textLength="135.2" lengthAdjust="spacingAndGlyphs"><tspan fill="#202124">tinkercad.com</tspan><tspan fill="#70757a">/things/b68fwcXqxPY-brontosaurus/edit</tspan></text>
<path d="M556.3,33.4 L557.1,36.4 L558.9,36.5 L557.5,38.4 L558,41.4 L556.3,39.8 L554.6,41.4 L555.1,38.4 L553.7,36.5 L555.5,36.4 Z" fill="none" stroke="#5f6368" stroke-width="0.7"/>
<rect x="569" y="31.3" width="6.8" height="11.5" fill="#1fa83c"/><path d="M570.6,37.4 L572,40 L574.4,34" stroke="#fff" stroke-width="1.1" fill="none"/>
<path d="M583.4,35 L584.6,35 Q584.8,32.8 585.6,33 Q586.4,32.8 586.6,35 L587.8,35 L587.8,37.4 Q588.8,37.6 588.8,38.6 Q588.8,39.6 587.8,39.8 L587.8,42 L583.4,42 L583.4,39.6 Q584.4,39.4 584.4,38.6 Q584.4,37.6 583.4,37.4 Z" fill="#4a4d51"/>
<clipPath id="cav"><ellipse cx="598.4" cy="37.1" rx="4.4" ry="7.9"/></clipPath><g clip-path="url(#cav)"><rect x="593" y="28" width="11" height="18" fill="#4a1418"/><ellipse cx="596.6" cy="36" rx="4" ry="8" fill="#e3591c"/><ellipse cx="598.8" cy="37.6" rx="3.3" ry="6.6" fill="#5a1a1c"/><ellipse cx="598.6" cy="32" rx="2.4" ry="2.6" fill="#b8381c" fill-opacity="0.8"/><rect x="597.6" y="36.4" width="0.8" height="1.6" fill="#ff5a4a"/><rect x="599.2" y="36.4" width="0.8" height="1.6" fill="#ff5a4a"/></g>
<ellipse cx="611.2" cy="33.6" rx="0.7" ry="1.1" fill="#5f6368"/>
<ellipse cx="611.2" cy="37.5" rx="0.7" ry="1.1" fill="#5f6368"/>
<ellipse cx="611.2" cy="41.4" rx="0.7" ry="1.1" fill="#5f6368"/>
<rect x="0" y="50.8" width="620" height="29.4" fill="#fff"/>
<rect x="0" y="80" width="620" height="34.4" fill="#f3f4f7"/>
<line x1="0" y1="80.3" x2="620" y2="80.3" stroke="#d7dde6" stroke-width="0.8"/>
<line x1="0" y1="114.4" x2="620" y2="114.4" stroke="#e3e6ea" stroke-width="0.6"/>
<rect x="1.0" y="46.4" width="5.5" height="10.5" fill="#e8452c"/>
<text x="3.75" y="55.0" font-size="8.5" fill="#fff" text-anchor="middle" font-weight="bold" textLength="3.2" lengthAdjust="spacingAndGlyphs" >T</text>
<rect x="6.9" y="46.4" width="5.5" height="10.5" fill="#f15a29"/>
<text x="9.65" y="55.0" font-size="8.5" fill="#fff" text-anchor="middle" font-weight="bold" textLength="1.2" lengthAdjust="spacingAndGlyphs" >I</text>
<rect x="12.8" y="46.4" width="5.5" height="10.5" fill="#f7941d"/>
<text x="15.55" y="55.0" font-size="8.5" fill="#fff" text-anchor="middle" font-weight="bold" textLength="3.2" lengthAdjust="spacingAndGlyphs" >N</text>
<rect x="1.0" y="57.5" width="5.5" height="10.5" fill="#3fae49"/>
<text x="3.75" y="66.1" font-size="8.5" fill="#fff" text-anchor="middle" font-weight="bold" textLength="3.2" lengthAdjust="spacingAndGlyphs" >K</text>
<rect x="6.9" y="57.5" width="5.5" height="10.5" fill="#7fc241"/>
<text x="9.65" y="66.1" font-size="8.5" fill="#fff" text-anchor="middle" font-weight="bold" textLength="3.2" lengthAdjust="spacingAndGlyphs" >E</text>
<rect x="12.8" y="57.5" width="5.5" height="10.5" fill="#c4d82e"/>
<text x="15.55" y="66.1" font-size="8.5" fill="#fff" text-anchor="middle" font-weight="bold" textLength="3.2" lengthAdjust="spacingAndGlyphs" >R</text>
<rect x="1.0" y="68.6" width="5.5" height="10.5" fill="#1b75bc"/>
<text x="3.75" y="77.19999999999999" font-size="8.5" fill="#fff" text-anchor="middle" font-weight="bold" textLength="3.2" lengthAdjust="spacingAndGlyphs" >C</text>
<rect x="6.9" y="68.6" width="5.5" height="10.5" fill="#27a9e1"/>
<text x="9.65" y="77.19999999999999" font-size="8.5" fill="#fff" text-anchor="middle" font-weight="bold" textLength="3.2" lengthAdjust="spacingAndGlyphs" >A</text>
<rect x="12.8" y="68.6" width="5.5" height="10.5" fill="#6dcff6"/>
<text x="15.55" y="77.19999999999999" font-size="8.5" fill="#fff" text-anchor="middle" font-weight="bold" textLength="3.2" lengthAdjust="spacingAndGlyphs" >D</text>
<rect x="0" y="40" width="20" height="10.6" fill="#fff"/>
<line x1="0" y1="50.3" x2="20" y2="50.3" stroke="#d5d8dc" stroke-width="0.8"/>
<rect x="24.3" y="55.3" width="8.3" height="13.5" rx="0.8" fill="#fff" stroke="#222" stroke-width="1.3"/>
<line x1="26" y1="58.7" x2="27.2" y2="58.7" stroke="#222" stroke-width="1.3"/><line x1="28" y1="58.7" x2="31.2" y2="58.7" stroke="#222" stroke-width="1.3"/>
<line x1="26" y1="62.1" x2="27.2" y2="62.1" stroke="#222" stroke-width="1.3"/><line x1="28" y1="62.1" x2="31.2" y2="62.1" stroke="#222" stroke-width="1.3"/>
<line x1="26" y1="65.5" x2="27.2" y2="65.5" stroke="#222" stroke-width="1.3"/><line x1="28" y1="65.5" x2="31.2" y2="65.5" stroke="#222" stroke-width="1.3"/>
<text x="38.8" y="66.1" font-size="11.8" fill="#3d4a63" text-anchor="start" font-weight="normal" textLength="41.5" lengthAdjust="spacingAndGlyphs" stroke="#3d4a63" stroke-width="0.3">Brontosaurus</text>
<text x="460.3" y="67.4" font-size="11.8" fill="#b9c5d6" text-anchor="start" font-weight="normal" textLength="55.2" lengthAdjust="spacingAndGlyphs" >All changes saved</text>
<rect x="519.4" y="50.8" width="20" height="29.3" fill="#5b8fdc"/>
<rect x="524.5" y="54.6" width="2.7" height="4.7" fill="#fff"/>
<rect x="528.0" y="54.6" width="2.7" height="4.7" fill="#fff"/>
<rect x="531.5" y="54.6" width="2.7" height="4.7" fill="#fff"/>
<rect x="524.5" y="60.7" width="2.7" height="4.7" fill="#fff"/>
<rect x="528.0" y="60.7" width="2.7" height="4.7" fill="#fff"/>
<rect x="531.5" y="60.7" width="2.7" height="4.7" fill="#fff"/>
<rect x="524.5" y="66.8" width="2.7" height="4.7" fill="#fff"/>
<rect x="528.0" y="66.8" width="2.7" height="4.7" fill="#fff"/>
<rect x="531.5" y="66.8" width="2.7" height="4.7" fill="#fff"/>
<line x1="559.6" y1="51" x2="559.6" y2="80" stroke="#eceff3" stroke-width="0.6"/>
<line x1="579.6" y1="51" x2="579.6" y2="80" stroke="#eceff3" stroke-width="0.6"/>
<path d="M543.6,72 L551.4,60.8" stroke="#25324a" stroke-width="2.3" stroke-linecap="round"/><path d="M543.8,71.8 L551.2,61" stroke="#fff" stroke-width="0.8"/>
<path d="M545.8,55.4 Q549,52.6 552.2,56.2 Q555.6,61.4 555.2,70.4" fill="none" stroke="#25324a" stroke-width="2.6" stroke-linecap="round"/><path d="M546.2,55.4 Q549,53.4 551.8,56.6 Q554.6,61.6 554.8,66" fill="none" stroke="#fff" stroke-width="0.9" stroke-dasharray="2.2 1"/><path d="M555,66 L555.2,70.4" stroke="#8a9bb0" stroke-width="1.2" stroke-linecap="round"/>
<path d="M563.8,69.6 L563.8,59.4 L565.2,59.4 L565.2,56.6 L568.4,56.6 L568.4,59.4 L570.6,59.4 L570.6,56.6 L573.8,56.6 L573.8,59.4 L575.2,59.4 L575.2,69.6 Z" fill="#2c4263"/>
<ellipse cx="590.4" cy="60" rx="2.8" ry="4.6" fill="none" stroke="#2a3a55" stroke-width="0.8"/>
<path d="M585.4,73.4 Q585,66.6 590.4,66.4 Q593.6,66.4 594.6,69 M585.4,73.4 L592,73.4" fill="none" stroke="#2a3a55" stroke-width="0.8"/>
<ellipse cx="595.6" cy="72.6" rx="2.6" ry="4" fill="#2a3a55"/><path d="M594.4,72.6 L596.8,72.6 M595.6,70.6 L595.6,74.6" stroke="#fff" stroke-width="0.6"/>
<clipPath id="av"><ellipse cx="610.8" cy="65.5" rx="9.7" ry="14.5"/></clipPath>
<g clip-path="url(#av)"><rect x="600" y="50" width="22" height="31" fill="#85858a"/><rect x="600" y="50" width="8" height="18" fill="#b2b5bb"/><rect x="600" y="66" width="8" height="15" fill="#77777c"/><rect x="613.5" y="50" width="8" height="31" fill="#5e5e63"/><rect x="616" y="60" width="3" height="8" fill="#c2c2c8"/><rect x="606.8" y="57" width="7" height="16" fill="#3d4538"/><rect x="607.6" y="72" width="5.2" height="9" fill="#25272a"/><ellipse cx="610.3" cy="54.8" rx="1.7" ry="2.6" fill="#6e5a4e"/><rect x="600" y="76" width="22" height="5" fill="#4a4a4e" fill-opacity="0.5"/></g>
<rect x="5" y="89.6" width="6.4" height="11.4" rx="0.8" fill="#f3f4f7" stroke="#333" stroke-width="0.9"/><rect x="8" y="93.6" width="6.8" height="12.4" rx="0.8" fill="#f3f4f7" stroke="#333" stroke-width="0.9"/>
<rect x="24.6" y="91.6" width="7.6" height="14" rx="0.8" fill="none" stroke="#c8d3df" stroke-width="0.9"/><rect x="27" y="89.4" width="2.8" height="3.6" fill="#f5f6f8" stroke="#c8d3df" stroke-width="0.8"/><rect x="27.6" y="96" width="5.6" height="8" fill="#f5f6f8" stroke="#c8d3df" stroke-width="0.8"/>
<path d="M44.4,95.6 L43.6,105.6 L47,106.8" fill="none" stroke="#333" stroke-width="0.9"/><path d="M46.2,94 L45.2,104.4 L49.6,105.4" fill="none" stroke="#333" stroke-width="0.9"/><rect x="47.8" y="89.6" width="6" height="13.6" rx="0.8" fill="#f3f4f7" stroke="#333" stroke-width="1.1"/>
<rect x="64.2" y="92.6" width="8.2" height="13.6" rx="1.4" fill="none" stroke="#222" stroke-width="1.1"/><path d="M63.2,91.4 L73.4,91.4 M66.6,91 Q68.3,86.6 70,91" stroke="#222" stroke-width="1" fill="none"/><path d="M66.6,95 L66.6,104 M68.3,95 L68.3,104 M70,95 L70,104" stroke="#555" stroke-width="0.7"/>
<line x1="78.2" y1="81" x2="78.2" y2="114" stroke="#e6e9ee" stroke-width="0.7"/>
<path d="M83.4,97.4 L88,92 L88,95.4 Q92.6,96 92.4,103.4 Q91,99.6 88,99.6 L88,102.8 Z" fill="#222"/>
<path d="M111,97.4 L106.4,92 L106.4,95.4 Q101.8,96 102,103.4 Q103.4,99.6 106.4,99.6 L106.4,102.8 Z" fill="#cdd6e2"/>
<path d="M415.6,103 Q412.6,96 414,91.6 Q417.4,86 420.8,91.6 Q422.2,96 419.2,103 Z" fill="none" stroke="#222" stroke-width="1"/><path d="M415.8,105.4 L419,105.4 M416.4,107.6 L418.4,107.6" stroke="#222" stroke-width="0.9"/><ellipse cx="416" cy="93.5" rx="0.8" ry="1.8" fill="#bbb"/>
<line x1="407.6" y1="81" x2="407.6" y2="114" stroke="#e9ecf0" stroke-width="0.6"/>
<line x1="427.6" y1="81" x2="427.6" y2="114" stroke="#e9ecf0" stroke-width="0.6"/>
<path d="M432.6,90.6 L441,90.6 L441,95 Q443.6,98 442.6,102.6 Q440.6,106.6 436.6,104 L432.6,103 Z" fill="none" stroke="#c6d2e0" stroke-width="1"/>
<path d="M452.6,103 L452.6,90.6 L460.8,90.6 L460.8,93" fill="none" stroke="#c6d2e0" stroke-width="1"/><ellipse cx="458.8" cy="99.6" rx="4" ry="6.6" fill="none" stroke="#c6d2e0" stroke-width="1"/>
<line x1="466.8" y1="81" x2="466.8" y2="114" stroke="#e9ecf0" stroke-width="0.6"/>
<line x1="473" y1="88.6" x2="473" y2="106.6" stroke="#b7c4d4" stroke-width="0.9"/><rect x="475" y="91.4" width="5.6" height="5" fill="none" stroke="#b7c4d4" stroke-width="0.9"/><rect x="475" y="99.4" width="3.6" height="4.6" fill="none" stroke="#b7c4d4" stroke-width="0.9"/>
<line x1="496" y1="87" x2="496" y2="108" stroke="#333" stroke-width="0.9"/><path d="M494.4,90.6 L490.4,104 L494.4,104 Z" fill="none" stroke="#222" stroke-width="0.9"/><path d="M497.6,90.6 L501.6,104 L497.6,104 Z" fill="#666" stroke="#222" stroke-width="0.9"/>
<line x1="505.4" y1="81" x2="505.4" y2="114" stroke="#e9ecf0" stroke-width="0.6"/>
<rect x="511.6" y="86.4" width="32" height="21.8" rx="1.6" fill="#f5f6f8" stroke="#e4e7eb" stroke-width="0.7"/>
<text x="527.6" y="100.3" font-size="11" fill="#5a6679" text-anchor="middle" font-weight="normal" textLength="18" lengthAdjust="spacingAndGlyphs" >Import</text>
<rect x="547" y="86.4" width="32.6" height="21.8" rx="1.6" fill="#f5f6f8" stroke="#e4e7eb" stroke-width="0.7"/>
<text x="563.3" y="100.3" font-size="11" fill="#5a6679" text-anchor="middle" font-weight="normal" textLength="17.4" lengthAdjust="spacingAndGlyphs" >Export</text>
<rect x="582.5" y="86.4" width="32.6" height="21.8" rx="1.6" fill="#f5f6f8" stroke="#e4e7eb" stroke-width="0.7"/>
<text x="598.8" y="100.3" font-size="11" fill="#5a6679" text-anchor="middle" font-weight="normal" textLength="21" lengthAdjust="spacingAndGlyphs" >Send To</text>
<rect x="0" y="588" width="620" height="3.4" fill="#e4e6e9"/>
<rect x="0" y="591.2" width="620" height="28.8" fill="#262524"/>
<rect x="19.3" y="591.2" width="138.8" height="28.8" fill="#f2f2f2"/>
<g transform="translate(0,0.9)">
<g fill="#fff"><path d="M6.6,600.2 L9.4,599.5 L9.4,604.4 L6.6,604.4 Z"/><path d="M10,599.3 L13.3,598.5 L13.3,604.4 L10,604.4 Z"/><path d="M6.6,605.2 L9.4,605.2 L9.4,610.1 L6.6,609.4 Z"/><path d="M10,605.2 L13.3,605.2 L13.3,611.1 L10,610.3 Z"/></g>
<ellipse cx="28.6" cy="603.6" rx="1.9" ry="3.2" fill="none" stroke="#333" stroke-width="0.8"/><line x1="27.4" y1="606.6" x2="25.4" y2="611" stroke="#333" stroke-width="0.8"/>
<text x="35.4" y="609.8" font-size="12" fill="#505050" text-anchor="start" font-weight="normal" textLength="53" lengthAdjust="spacingAndGlyphs" >Type here to search</text>
<g stroke="#e8e8e8" stroke-width="0.7" fill="none"><rect x="163.6" y="601.4" width="3.4" height="7"/><path d="M162.4,600.2 L162.4,610 M168.2,600.2 L168.2,610"/></g>
<path d="M184.6,606 L192,606 Q192,598 188.4,598 Q185,598 184.8,604 Q184.8,612 188.6,612 Q190.6,612 191.8,610" fill="none" stroke="#1e8be6" stroke-width="2"/>
<rect x="205.6" y="600.6" width="7.6" height="10" fill="#f6c445"/><rect x="205.6" y="598.6" width="3.6" height="3" fill="#e3a72b"/><rect x="207.4" y="606" width="4" height="4.6" fill="#3d8fd6"/>
<ellipse cx="228.6" cy="605.2" rx="4" ry="7" fill="#16325c"/><ellipse cx="229.8" cy="603.2" rx="1.5" ry="2.4" fill="#fff"/><path d="M225,606.6 L228.6,608.8" stroke="#fff" stroke-width="1.1"/>
<rect x="244.6" y="601.6" width="6.8" height="10.4" fill="#fff"/><path d="M246.4,601.6 Q246.4,597.6 248,597.6 Q249.6,597.6 249.6,601.6" stroke="#fff" stroke-width="0.7" fill="none"/><rect x="246.2" y="604" width="1.6" height="2.6" fill="#f25022"/><rect x="248.2" y="604" width="1.6" height="2.6" fill="#7fba00"/><rect x="246.2" y="607" width="1.6" height="2.6" fill="#00a4ef"/><rect x="248.2" y="607" width="1.6" height="2.6" fill="#ffb900"/>
<rect x="264.4" y="598" width="7.4" height="14" fill="#0c0c0e"/><path d="M265.6,600 L268,606 L270.6,600 L269.6,610 L268,607.6 L266.4,610 Z" fill="#6a6e78"/>
<path d="M284.4,603 L289,598.4 L293.6,603 L293.6,611.4 L284.4,611.4 Z" fill="#2a8fe0"/><path d="M284.4,603 L289,607.6 L293.6,603" stroke="#fff" stroke-width="0.7" fill="none"/><ellipse cx="293.8" cy="611" rx="2.2" ry="3.4" fill="#262524" stroke="#fff" stroke-width="0.5"/>
<text x="293.8" y="613.2" font-size="5.5" fill="#fff" text-anchor="middle" font-weight="normal" textLength="1.6" lengthAdjust="spacingAndGlyphs" >2</text>
<rect x="299" y="590.3" width="20" height="30.2" fill="#3d4148"/><rect x="299" y="618.4" width="20" height="1.6" fill="#8cc0ee"/><rect x="201" y="618.6" width="16.6" height="1.4" fill="#8cc0ee"/>
<ellipse cx="309" cy="605" rx="3.9" ry="6.8" fill="#de4a3c"/><path d="M309,605 L305.4,609 A3.9,6.8 0 0 0 311.6,610 Z" fill="#3aa757"/><path d="M309,605 L311.6,610 A3.9,6.8 0 0 0 312.6,602.4 Z" fill="#f7c12c"/><ellipse cx="309" cy="605" rx="1.6" ry="2.8" fill="#4a8af4" stroke="#fff" stroke-width="0.5"/>
<rect x="324.8" y="598.2" width="7.6" height="13.6" fill="#f0ddc2"/><rect x="325.6" y="599.4" width="5.2" height="11.2" fill="#e8730c"/><path d="M327,609 L327,601.6 L329.8,601.6 M327,605 L329.2,605" stroke="#fff" stroke-width="0.9" fill="none"/>
<ellipse cx="348.4" cy="605" rx="3.9" ry="6.8" fill="#10a3a1"/><ellipse cx="347" cy="605" rx="1.2" ry="1.9" fill="none" stroke="#fff" stroke-width="0.5"/><ellipse cx="349.8" cy="605" rx="1.2" ry="1.9" fill="none" stroke="#fff" stroke-width="0.5"/>
<path d="M501.8,607 L503.9,602.6 L506,607" stroke="#fff" stroke-width="0.8" fill="none"/>
<path d="M510.6,608.4 Q509.6,604.6 512,604.4 Q512.6,600.8 515,602.4 Q517.2,603.4 516.8,608.4 Z" fill="#eee"/>
<rect x="520" y="602.4" width="6" height="6.4" fill="none" stroke="#fff" stroke-width="0.7"/><rect x="520.6" y="603" width="3" height="5.2" fill="#fff"/>
<path d="M531,609.4 Q531,602 535.6,601 M532.6,609.4 Q532.8,604.6 535.6,604 M534,609.4 Q534.2,607 535.6,606.8" stroke="#ddd" stroke-width="0.7" fill="none"/>
<path d="M540,604 L541.2,604 L542.6,601.6 L542.6,610 L541.2,607.6 L540,607.6 Z" fill="#fff"/><path d="M543.8,603 Q545,605.6 543.8,608.6 M545,601.4 Q547,605.6 545,610" stroke="#fff" stroke-width="0.5" fill="none"/>
<g fill="#fff"><rect x="549.6" y="600.4" width="1.5" height="3.6"/><rect x="552.6" y="600.4" width="1.5" height="3.6"/><rect x="549.2" y="604.6" width="5.4" height="1.4"/></g><rect x="550" y="606.6" width="3.6" height="5.6" fill="#d9232e"/>
<text x="564.2" y="609" font-size="8.5" fill="#fff" text-anchor="middle" font-weight="normal" textLength="8.6" lengthAdjust="spacingAndGlyphs" >ENG</text>
<text x="585.4" y="602.6" font-size="9.2" fill="#fff" text-anchor="middle" font-weight="normal" textLength="16.4" lengthAdjust="spacingAndGlyphs" >9:12 PM</text>
<text x="585.4" y="615.6" font-size="9.2" fill="#fff" text-anchor="middle" font-weight="normal" textLength="20.6" lengthAdjust="spacingAndGlyphs" >8/18/2020</text>
<path d="M604.8,599.6 L610.4,599.6 L610.4,609.6 L607,609.6 L604.8,612.6 Z" fill="none" stroke="#fff" stroke-width="0.8"/><path d="M606,602.4 L609.2,602.4 M606,605 L609.2,605" stroke="#fff" stroke-width="0.6"/><ellipse cx="610.4" cy="611.4" rx="2.3" ry="3.6" fill="#262524" stroke="#fff" stroke-width="0.5"/>
<text x="610.4" y="613.6" font-size="5.5" fill="#fff" text-anchor="middle" font-weight="normal" textLength="1.6" lengthAdjust="spacingAndGlyphs" >2</text>
</g>
</svg>
</body></html>
